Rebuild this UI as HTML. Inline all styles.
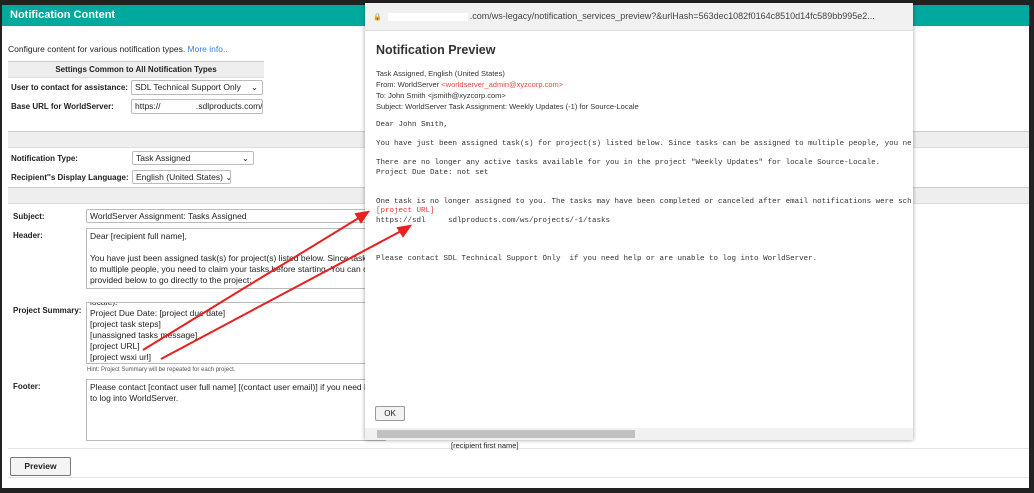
<!DOCTYPE html>
<html><head><meta charset="utf-8"><style>
body{margin:0;width:1034px;height:493px;background:#222;position:relative;overflow:hidden;font-family:"Liberation Sans",sans-serif;font-size:8.5px;color:#222}
.a{position:absolute}
.page{left:2px;top:5px;width:1027px;height:483px;background:#fff;overflow:hidden}
.hdr{left:0;top:0;width:1027px;height:21px;background:#00a99d;color:#fff;font-weight:bold;font-size:11px;line-height:21px;padding-left:8px;box-sizing:border-box}
.band{background:#eee;border-top:1px solid #ccc;border-bottom:1px solid #ddd}
.lbl{font-weight:bold;font-size:8px;white-space:nowrap}
.inp{border:1px solid #bbb;background:#fff;font-size:8.5px;line-height:13px;padding-left:3px;box-sizing:border-box;border-radius:2px;white-space:nowrap;overflow:hidden}
.ta{border:1px solid #bbb;background:#fff;font-size:8.5px;line-height:11px;padding:2px 3px;box-sizing:border-box;white-space:nowrap;overflow:hidden}
.mono{font-family:"Liberation Mono",monospace;font-size:7.5px;white-space:pre}
</style></head><body>
<div class="a page">
 <div class="a hdr">Notification Content</div>
 <div class="a" style="left:6px;top:39px">Configure content for various notification types. <span style="color:#3b7ddd">More info..</span></div>
 <div class="a band" style="left:6px;top:56px;width:256px;height:15px;text-align:center;font-weight:bold;font-size:8px;line-height:15px">Settings Common to All Notification Types</div>
 <div class="a lbl" style="left:9px;top:78px">User to contact for assistance:</div>
 <div class="a inp" style="left:129px;top:75px;width:132px;height:15px">SDL Technical Support Only <span style="position:absolute;right:4px">⌄</span></div>
 <div class="a lbl" style="left:9px;top:97px">Base URL for WorldServer:</div>
 <div class="a inp" style="left:129px;top:94px;width:132px;height:15px">https://&nbsp;&nbsp;&nbsp;&nbsp;&nbsp;&nbsp;&nbsp;&nbsp;&nbsp;&nbsp;&nbsp;&nbsp;&nbsp;&nbsp;&nbsp;.sdlproducts.com/w</div>
 <div class="a band" style="left:6px;top:126px;width:1021px;height:15px"></div>
 <div class="a lbl" style="left:9px;top:149px">Notification Type:</div>
 <div class="a inp" style="left:130px;top:146px;width:122px;height:14px">Task Assigned <span style="position:absolute;right:4px">⌄</span></div>
 <div class="a lbl" style="left:9px;top:168px">Recipient''s Display Language:</div>
 <div class="a inp" style="left:130px;top:165px;width:99px;height:14px">English (United States) ⌄</div>
 <div class="a band" style="left:6px;top:182px;width:1021px;height:15px"></div>
 <div class="a lbl" style="left:11px;top:207px">Subject:</div>
 <div class="a inp" style="left:84px;top:204px;width:300px;height:14px">WorldServer Assignment: Tasks Assigned</div>
 <div class="a lbl" style="left:11px;top:226px">Header:</div>
 <div class="a ta" style="left:84px;top:223px;width:300px;height:61px">Dear [recipient full name],<br><br>You have just been assigned task(s) for project(s) listed below. Since tasks can<br>to multiple people, you need to claim your tasks before starting. You can click<br>provided below to go directly to the project:</div>
 <div class="a lbl" style="left:11px;top:301px">Project Summary:</div>
 <div class="a ta" style="left:84px;top:297px;width:300px;height:62px;padding-top:0"><div style="margin-top:-6px">locale).<br>Project Due Date: [project due date]<br>[project task steps]<br>[unassigned tasks message]<br>[project URL]<br>[project wsxi url]</div></div>
 <div class="a" style="left:85px;top:362px;font-size:6px;color:#555">Hint: Project Summary will be repeated for each project.</div>
 <div class="a lbl" style="left:11px;top:377px">Footer:</div>
 <div class="a ta" style="left:84px;top:374px;width:300px;height:62px">Please contact [contact user full name] [(contact user email)] if you need help<br>to log into WorldServer.</div>
 <div class="a" style="left:6px;top:443px;width:1021px;border-top:1px solid #e5e5e5"></div>
 <div class="a" style="left:8px;top:452px;width:59px;height:17px;border:1px solid #777;border-radius:2px;background:#f4f4f4;text-align:center;line-height:17px;font-weight:bold;font-size:8.5px">Preview</div>
 <div class="a" style="left:6px;top:472px;width:1021px;border-top:1px solid #e5e5e5"></div>
 <div class="a" style="left:449px;top:436px;font-size:7.5px">[recipient first name]</div>
</div>
<!-- popup -->
<div class="a" style="left:365px;top:3px;width:548px;height:437px;background:#fff;box-shadow:0 0 4px rgba(0,0,0,.4);overflow:hidden">
 <div class="a" style="left:0;top:0;width:548px;height:27px;background:#f1f1f1;border-bottom:1px solid #ddd;font-size:9px;color:#444;line-height:27px;white-space:nowrap;overflow:hidden">
  <span style="margin-left:8px;font-size:7px">🔒</span><span style="display:inline-block;width:80px;height:8px;background:#fff;margin:0 2px 0 6px;vertical-align:middle"></span>.com/ws-legacy/notification_services_preview?&amp;urlHash=563dec1082f0164c8510d14fc589bb995e2...</div>
 <div class="a" style="left:11px;top:40px;font-weight:bold;font-size:12.5px;color:#333">Notification Preview</div>
 <div class="a" style="left:11px;top:65px;font-size:7.5px;line-height:11px;color:#333;white-space:nowrap">Task Assigned, English (United States)<br>From: WorldServer <span style="color:#e44">&lt;worldserver_admin@xyzcorp.com&gt;</span><br>To: John Smith &lt;jsmith@xyzcorp.com&gt;<br>Subject: WorldServer Task Assignment: Weekly Updates (-1) for Source-Locale</div>
 <div class="a mono" style="left:11px;top:118px;width:537px;overflow:hidden;line-height:9.6px;color:#333">Dear John Smith,

You have just been assigned task(s) for project(s) listed below. Since tasks can be assigned to multiple people, you ne

There are no longer any active tasks available for you in the project "Weekly Updates" for locale Source-Locale.
Project Due Date: not set


One task is no longer assigned to you. The tasks may have been completed or canceled after email notifications were sch
<span style="color:#e33">[project URL]</span>
https://sdl     sdlproducts.com/ws/projects/-1/tasks



Please contact SDL Technical Support Only  if you need help or are unable to log into WorldServer.</div>
 <div class="a" style="left:10px;top:403px;width:28px;height:13px;border:1px solid #999;background:#f3f3f3;text-align:center;line-height:13px;font-size:8px;border-radius:2px">OK</div>
 <div class="a" style="left:0;top:425px;width:548px;height:12px;background:#f1f1f1"></div>
 <div class="a" style="left:12px;top:427px;width:258px;height:8px;background:#c1c1c1"></div>
</div>
<svg class="a" style="left:0;top:0" width="1034" height="493">
 <g stroke="#e8201e" stroke-width="2" fill="#e8201e">
  <line x1="143" y1="350" x2="362" y2="216"/>
  <polygon points="368,212 356,214 361,222"/>
  <line x1="161" y1="359" x2="403" y2="230"/>
  <polygon points="410,226 398,228 403,236"/>
 </g>
</svg>
</body></html>
